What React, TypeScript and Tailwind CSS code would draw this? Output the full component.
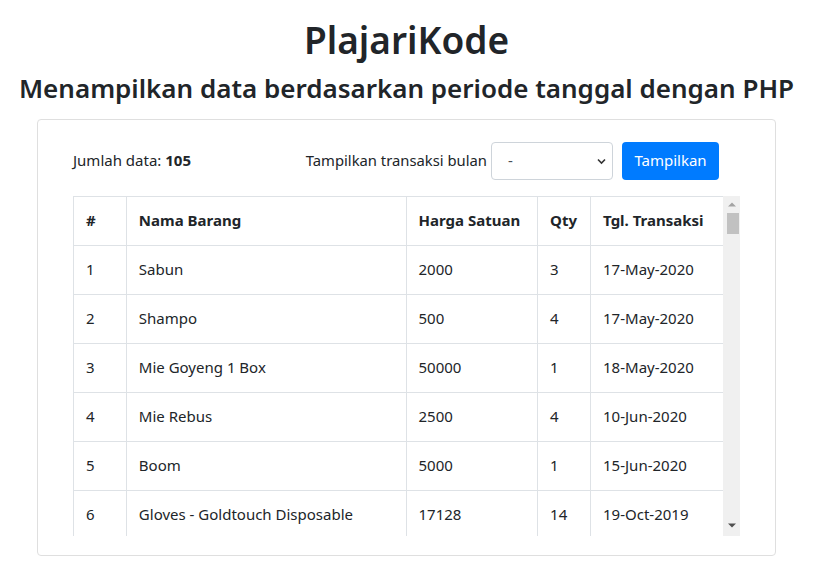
import React from 'react'

type Row = { no: number; nama: string; harga: number; qty: number; tgl: string }

const rows: Row[] = [
  { no: 1, nama: 'Sabun', harga: 2000, qty: 3, tgl: '17-May-2020' },
  { no: 2, nama: 'Shampo', harga: 500, qty: 4, tgl: '17-May-2020' },
  { no: 3, nama: 'Mie Goyeng 1 Box', harga: 50000, qty: 1, tgl: '18-May-2020' },
  { no: 4, nama: 'Mie Rebus', harga: 2500, qty: 4, tgl: '10-Jun-2020' },
  { no: 5, nama: 'Boom', harga: 5000, qty: 1, tgl: '15-Jun-2020' },
  { no: 6, nama: 'Gloves - Goldtouch Disposable', harga: 17128, qty: 14, tgl: '19-Oct-2019' },
]

const font = { fontFamily: '"Noto Sans", "Open Sans", sans-serif' }

// fake classic scrollbar, headless chrome draws overlay bars only
function ScrollBar() {
  return (
    <div className="w-[17px] h-[340px] bg-[#f0f0f0] flex flex-col items-center">
      <div className="h-[17px] flex items-center justify-center">
        <svg width="8" height="5" viewBox="0 0 8 5">
          <path d="M0 4.5 L4 0.5 L8 4.5 Z" fill="#a3a3a3" />
        </svg>
      </div>
      <div className="w-[12px] h-[21px] bg-[#c1c1c1] ml-[2px]" />
      <div className="flex-1" />
      <div className="h-[17px] flex items-center justify-center mb-[2px]">
        <svg width="8" height="5" viewBox="0 0 8 5">
          <path d="M0 0.5 L4 4.5 L8 0.5 Z" fill="#505050" />
        </svg>
      </div>
    </div>
  )
}

export default function App() {
  return (
    <div className="bg-white text-[#212529]" style={font}>
      <h1 className="text-center text-[37px] font-semibold leading-[1.2] pt-[18px] mb-[11px]">PlajariKode</h1>
      <h3 className="text-center text-[26px] font-semibold leading-[1.2] mb-[14px]">
        Menampilkan data berdasarkan periode tanggal dengan PHP
      </h3>
      <div className="mx-[37px] border border-[#dfdfdf] rounded-[4px] pl-[35px] pr-[35px] pt-[22px] pb-[19px]">
        <div className="flex items-center h-[38px] mb-[16px]">
          <div className="text-[15px] flex-1">
            Jumlah data: <b>105</b>
          </div>
          <div className="flex items-center mr-[21px]">
            <span className="text-[14.8px] mr-[4px]">Tampilkan transaksi bulan</span>
            <div className="relative w-[122px] h-[38px] border border-[#ced4da] rounded-[4px] flex items-center pl-[16px] text-[15px] text-[#495057]">
              -
              <svg className="absolute right-[6px] top-[15px]" width="9" height="7" viewBox="0 0 9 7">
                <path d="M1 1.5 L4.5 5 L8 1.5" fill="none" stroke="#333" strokeWidth="1.6" />
              </svg>
            </div>
            <button className="ml-[9px] h-[38px] px-[12px] w-[97px] bg-[#007bff] text-white rounded-[4px] text-[15px]">
              Tampilkan
            </button>
          </div>
        </div>
        <div className="flex">
          <div className="h-[340px] w-[651px] overflow-hidden">
            <table className="w-[651px] border-collapse text-[15px]">
              <colgroup>
                <col className="w-[53px]" />
                <col className="w-[280px]" />
                <col className="w-[132px]" />
                <col className="w-[53px]" />
                <col className="w-[133px]" />
              </colgroup>
              <thead>
                <tr className="h-[49px]">
                  <th className="border border-[#dee2e6] px-[12px] text-left font-bold">#</th>
                  <th className="border border-[#dee2e6] px-[12px] text-left font-bold">Nama Barang</th>
                  <th className="border border-[#dee2e6] px-[12px] text-left font-bold">Harga Satuan</th>
                  <th className="border border-[#dee2e6] px-[12px] text-left font-bold">Qty</th>
                  <th className="border border-[#dee2e6] px-[12px] text-left font-bold whitespace-nowrap">Tgl. Transaksi</th>
                </tr>
              </thead>
              <tbody>
                {rows.map(r => (
                  <tr key={r.no} className="h-[49px]">
                    <td className="border border-[#dee2e6] px-[12px]">{r.no}</td>
                    <td className="border border-[#dee2e6] px-[12px] whitespace-nowrap">{r.nama}</td>
                    <td className="border border-[#dee2e6] px-[12px]">{r.harga}</td>
                    <td className="border border-[#dee2e6] px-[12px]">{r.qty}</td>
                    <td className="border border-[#dee2e6] px-[12px]">{r.tgl}</td>
                  </tr>
                ))}
              </tbody>
            </table>
          </div>
          <ScrollBar />
        </div>
      </div>
    </div>
  )
}
